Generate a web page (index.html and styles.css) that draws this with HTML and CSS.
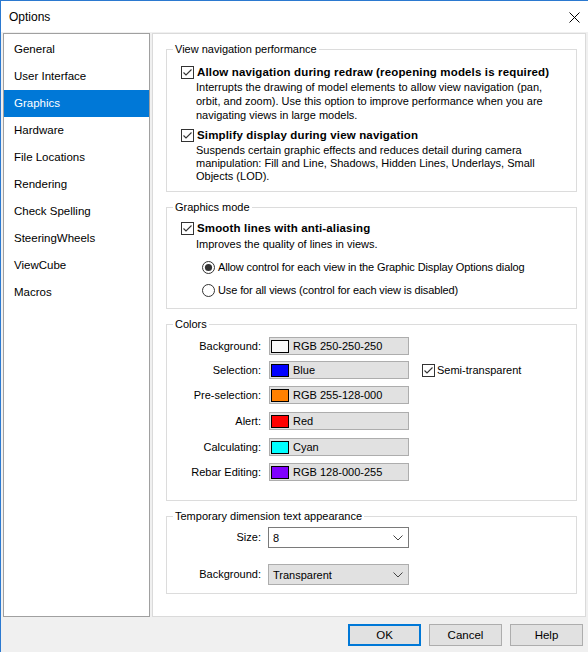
FILE: index.html
```html
<!DOCTYPE html>
<html>
<head>
<meta charset="utf-8">
<title>Options</title>
<link rel="stylesheet" href="styles.css">
</head>
<body>
<div class="window">
  <div class="titlebar">
    <span class="title">Options</span>
    <svg class="close" width="11" height="11" viewBox="0 0 11 11"><path d="M0.5 0.5 L10.5 10.5 M10.5 0.5 L0.5 10.5" stroke="#000" stroke-width="1" fill="none"/></svg>
  </div>
  <div class="main">
    <ul class="nav">
      <li>General</li>
      <li>User Interface</li>
      <li class="active">Graphics</li>
      <li>Hardware</li>
      <li>File Locations</li>
      <li>Rendering</li>
      <li>Check Spelling</li>
      <li>SteeringWheels</li>
      <li>ViewCube</li>
      <li>Macros</li>
    </ul>
    <div class="content">
      <fieldset class="group g1">
        <legend>View navigation performance</legend>
        <div class="inner">
          <div class="check-row">
            <svg class="cb" width="13" height="13" viewBox="0 0 13 13"><rect x="0.5" y="0.5" width="12" height="12" fill="#fff" stroke="#333"/><path d="M2.5 6.5 L5 9 L10.5 3.5" stroke="#333" stroke-width="1.1" fill="none"/></svg>
            <span class="bold">Allow navigation during redraw (reopening models is required)</span>
          </div>
          <div class="desc d1">Interrupts the drawing of model elements to allow view navigation (pan,<br>orbit, and zoom). Use this option to improve performance when you are<br>navigating views in large models.</div>
          <div class="check-row r2">
            <svg class="cb" width="13" height="13" viewBox="0 0 13 13"><rect x="0.5" y="0.5" width="12" height="12" fill="#fff" stroke="#333"/><path d="M2.5 6.5 L5 9 L10.5 3.5" stroke="#333" stroke-width="1.1" fill="none"/></svg>
            <span class="bold">Simplify display during view navigation</span>
          </div>
          <div class="desc d2">Suspends certain graphic effects and reduces detail during camera<br>manipulation: Fill and Line, Shadows, Hidden Lines, Underlays, Small<br>Objects (LOD).</div>
        </div>
      </fieldset>

      <fieldset class="group g2">
        <legend>Graphics mode</legend>
        <div class="inner">
          <div class="check-row">
            <svg class="cb" width="13" height="13" viewBox="0 0 13 13"><rect x="0.5" y="0.5" width="12" height="12" fill="#fff" stroke="#333"/><path d="M2.5 6.5 L5 9 L10.5 3.5" stroke="#333" stroke-width="1.1" fill="none"/></svg>
            <span class="bold">Smooth lines with anti-aliasing</span>
          </div>
          <div class="desc d3">Improves the quality of lines in views.</div>
          <div class="radio-row">
            <svg class="rb" width="13" height="13" viewBox="0 0 13 13"><circle cx="6.5" cy="6.5" r="6" fill="#fff" stroke="#333"/><circle cx="6.5" cy="6.5" r="3.6" fill="#333"/></svg>
            <span>Allow control for each view in the Graphic Display Options dialog</span>
          </div>
          <div class="radio-row">
            <svg class="rb" width="13" height="13" viewBox="0 0 13 13"><circle cx="6.5" cy="6.5" r="6" fill="#fff" stroke="#333"/></svg>
            <span>Use for all views (control for each view is disabled)</span>
          </div>
        </div>
      </fieldset>

      <fieldset class="group g3">
        <legend>Colors</legend>
        <div class="inner colors">
          <span class="lbl">Background:</span>
          <div class="field"><span class="swatch" style="background:#fafafa"></span><span>RGB 250-250-250</span></div>
          <span></span>

          <span class="lbl">Selection:</span>
          <div class="field"><span class="swatch" style="background:#0000ff"></span><span>Blue</span></div>
          <div class="semi">
            <svg class="cb" width="13" height="13" viewBox="0 0 13 13"><rect x="0.5" y="0.5" width="12" height="12" fill="#fff" stroke="#333"/><path d="M2.5 6.5 L5 9 L10.5 3.5" stroke="#333" stroke-width="1.1" fill="none"/></svg>
            <span>Semi-transparent</span>
          </div>

          <span class="lbl">Pre-selection:</span>
          <div class="field"><span class="swatch" style="background:#ff8000"></span><span>RGB 255-128-000</span></div>
          <span></span>

          <span class="lbl">Alert:</span>
          <div class="field"><span class="swatch" style="background:#ff0000"></span><span>Red</span></div>
          <span></span>

          <span class="lbl">Calculating:</span>
          <div class="field"><span class="swatch" style="background:#00ffff"></span><span>Cyan</span></div>
          <span></span>

          <span class="lbl">Rebar Editing:</span>
          <div class="field"><span class="swatch" style="background:#8000ff"></span><span>RGB 128-000-255</span></div>
          <span></span>
        </div>
      </fieldset>

      <fieldset class="group g4">
        <legend>Temporary dimension text appearance</legend>
        <div class="inner dims">
          <span class="lbl">Size:</span>
          <div class="combo edit"><span>8</span><svg width="10" height="6" viewBox="0 0 10 6"><path d="M0.5 0.5 L5 5 L9.5 0.5" stroke="#444" fill="none"/></svg></div>
          <span class="lbl">Background:</span>
          <div class="combo list"><span>Transparent</span><svg width="10" height="6" viewBox="0 0 10 6"><path d="M0.5 0.5 L5 5 L9.5 0.5" stroke="#444" fill="none"/></svg></div>
        </div>
      </fieldset>
    </div>
  </div>
  <div class="footer">
    <button class="btn default">OK</button>
    <button class="btn">Cancel</button>
    <button class="btn">Help</button>
  </div>
</div>
</body>
</html>
```
FILE: styles.css
```css
* { box-sizing: border-box; }
html, body { margin: 0; padding: 0; }
body {
  width: 588px;
  height: 652px;
  overflow: hidden;
  font-family: "Liberation Sans", Arial, sans-serif;
  font-size: 11px;
  color: #000;
}
.window {
  width: 588px;
  height: 652px;
  background: #f0f0f0;
  border-top: 1px solid #2b79d0;
  border-left: 1px solid #2b79d0;
  display: flex;
  flex-direction: column;
}
.titlebar {
  flex: none;
  height: 31px;
  background: #fff;
  display: flex;
  align-items: center;
  justify-content: space-between;
  padding: 1px 8px 0 8px;
}
.title { font-size: 12px; }
.close { display: block; }
.main {
  flex: none;
  display: flex;
  padding: 1px 0 0 2px;
  height: 585px;
}
.nav {
  list-style: none;
  margin: 0;
  padding: 2px 0 0 0;
  width: 147px;
  height: 584px;
  background: #fff;
  border: 1px solid #a0a0a0;
}
.nav li {
  height: 27px;
  line-height: 27px;
  padding-left: 10px;
  font-size: 11.5px;
}
.nav li.active {
  background: #0078d7;
  color: #fff;
}
.content {
  width: 434px;
  height: 584px;
  margin-left: 2px;
  background: #fff;
  border: 1px solid #dadada;
  padding: 8px 0 0 13px;
}
.group {
  margin: 0 0 8px 0;
  padding: 0;
  width: 411px;
  border: 1px solid #dcdcdc;
  min-inline-size: 0;
}
.group legend {
  margin-left: 6px;
  padding: 0 2px;
  line-height: 14px;
  font-size: 11px;
}
.inner { padding-left: 14px; }
.check-row {
  display: flex;
  align-items: center;
  height: 14px;
  gap: 3px;
  white-space: nowrap;
}
.cb, .rb { display: block; flex: none; }
.bold {
  font-weight: bold;
  font-size: 11.5px;
  letter-spacing: 0.15px;
}
.desc {
  margin-left: 15px;
  white-space: nowrap;
}
.g1 .inner { padding-top: 9px; padding-bottom: 8px; }
.d1 { margin-top: 1px; line-height: 14px; }
.r2 { margin-top: 6px; }
.d2 { margin-top: 2px; line-height: 13px; }

.g2 .inner { padding-top: 7px; padding-bottom: 11px; }
.d3 { margin-top: 2px; line-height: 14px; }
.radio-row {
  display: flex;
  align-items: center;
  height: 14px;
  gap: 3px;
  margin-top: 9px;
  margin-left: 21px;
  white-space: nowrap;
  letter-spacing: -0.12px;
}

.colors {
  padding: 6px 0 19px 0;
  display: grid;
  grid-template-columns: 94px 140px auto;
  grid-template-rows: 24px 25px 26px 26px 25px 18px;
  column-gap: 8px;
  align-items: start;
}
.lbl { text-align: right; white-space: nowrap; line-height: 18px; }
.field {
  height: 18px;
  background: #e1e1e1;
  border: 1px solid #adadad;
  padding-left: 1px;
  display: flex;
  align-items: center;
  gap: 4px;
}
.swatch {
  width: 18px;
  height: 13px;
  border: 1px solid #000;
  flex: none;
}
.semi {
  height: 18px;
  display: flex;
  align-items: center;
  gap: 2px;
  margin-left: 5px;
  white-space: nowrap;
}

.dims {
  padding: 4px 0 8px 0;
  display: grid;
  grid-template-columns: 94px 141px;
  grid-template-rows: 21px 21px;
  column-gap: 7px;
  row-gap: 16px;
  align-items: center;
}
.dims .lbl { line-height: 21px; }
.combo {
  height: 21px;
  display: flex;
  align-items: center;
  justify-content: space-between;
  padding: 0 5px 0 4px;
}
.combo svg { display: block; }
.combo.edit { background: #fff; border: 1px solid #7a7a7a; }
.combo.list { background: #e1e1e1; border: 1px solid #adadad; }

.footer {
  flex: 1;
  display: flex;
  justify-content: flex-end;
  align-items: flex-start;
  gap: 8px;
  padding: 7px 5px 0 0;
}
.btn {
  width: 73px;
  height: 22px;
  background: #e1e1e1;
  border: 1px solid #adadad;
  font-family: "Liberation Sans", Arial, sans-serif;
  font-size: 11.5px;
  color: #000;
  padding: 0;
}
.btn.default { border: 2px solid #0078d7; }
```
